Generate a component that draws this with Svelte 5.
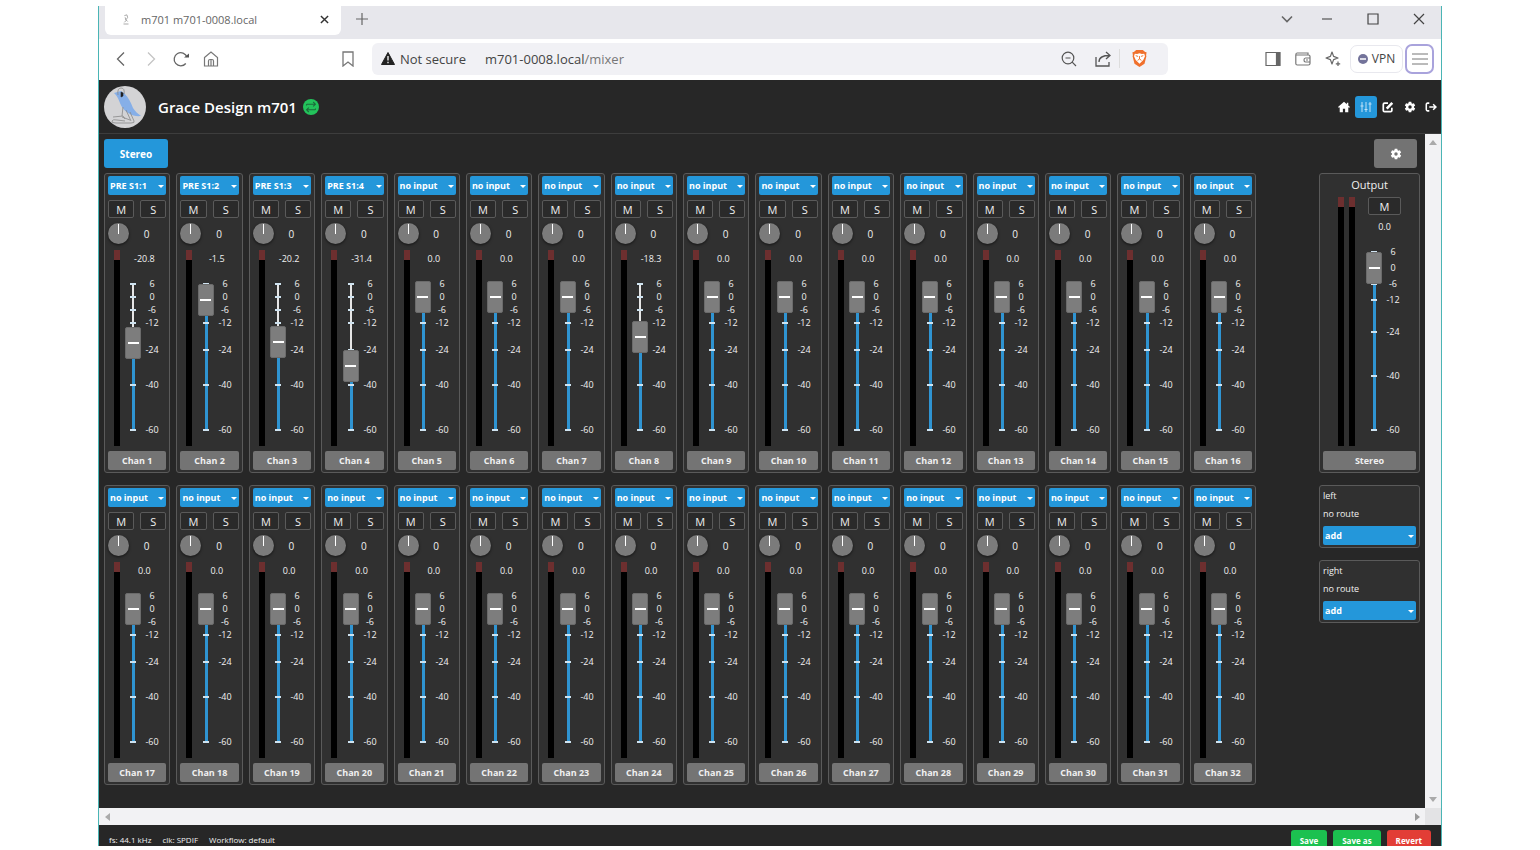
<script>
  const scale = [
    { db: 6, at: 0 },
    { db: 0, at: 0.09 },
    { db: -6, at: 0.18 },
    { db: -12, at: 0.27 },
    { db: -24, at: 0.452 },
    { db: -40, at: 0.695 },
    { db: -60, at: 1 },
  ];

  const levels = { 1: -20.8, 2: -1.5, 3: -20.2, 4: -31.4, 8: -18.3 };

  let channels = Array.from({ length: 32 }, (_, i) => {
    const id = i + 1;
    return {
      id,
      input: id <= 4 ? `PRE S1:${id}` : "no input",
      pan: 0,
      position: toPosition(levels[id] ?? 0),
    };
  });

  let output = { position: toPosition(0) };
  let routes = ["left", "right"];

  // fader travel is 0 (bottom) to 100 (top), linear between scale marks
  function toPosition(db) {
    for (let i = 1; i < scale.length; i++) {
      const hi = scale[i - 1];
      const lo = scale[i];
      if (db >= lo.db) {
        const part = (hi.db - db) / (hi.db - lo.db);
        return 100 - (hi.at + part * (lo.at - hi.at)) * 100;
      }
    }
    return 0;
  }

  function toDb(position) {
    const at = 1 - position / 100;
    for (let i = 1; i < scale.length; i++) {
      const hi = scale[i - 1];
      const lo = scale[i];
      if (at <= lo.at) {
        const part = (at - hi.at) / (lo.at - hi.at);
        const db = hi.db + part * (lo.db - hi.db);
        return (Math.round(db * 10) / 10 || 0).toFixed(1);
      }
    }
    return "-60.0";
  }
</script>

{#snippet gear()}
  <svg viewBox="0 0 16 16" width="12" height="12" fill="currentColor" aria-hidden="true">
    <path fill-rule="evenodd" d="M6.3 1h3.4l.4 2.1 1.1.6 2-.7 1.7 3-1.6 1.4v1.2l1.6 1.4-1.7 3-2-.7-1.1.6-.4 2.1H6.3l-.4-2.1-1.1-.6-2 .7-1.7-3 1.6-1.4V7.4L1.1 6l1.7-3 2 .7 1.1-.6zM8 5.7a2.3 2.3 0 1 0 0 4.6 2.3 2.3 0 0 0 0-4.6z" />
  </svg>
{/snippet}

{#snippet fader(strip, travel, label)}
  <div class="fader">
    <svg width="42" height={travel + 32} aria-hidden="true">
      <rect x="8" y="16" width="2" height={travel} fill="#e6e6e6" />
      <rect
        x="8"
        y={16 + travel * (1 - strip.position / 100)}
        width="3"
        height={(travel * strip.position) / 100}
        fill="#2f94d2"
      />
      {#each scale as mark}
        <rect x="6" y={Math.round(15 + mark.at * travel)} width="6" height="2" fill="#cfe3f0" />
        <text x="28" y={Math.round(19 + mark.at * travel)} text-anchor="middle">{mark.db}</text>
      {/each}
    </svg>
    <input type="range" min="0" max="100" step="any" aria-label={label} bind:value={strip.position} />
  </div>
{/snippet}

<div class="window">
  <div class="tabstrip">
    <div class="tab">
      <svg viewBox="0 0 12 14" width="10" height="12" fill="none" stroke="#999">
        <path d="M4 3l3-1 1 3-2 3 2 2M5 5l1 4-2 2M3 13h6" />
      </svg>
      <span>m701 m701-0008.local</span>
      <button aria-label="Close tab">
        <svg viewBox="0 0 10 10" width="9" height="9" stroke="#333" stroke-width="1.6"><path d="M1 1l8 8M9 1l-8 8" /></svg>
      </button>
    </div>
    <button class="newtab" aria-label="New tab">
      <svg viewBox="0 0 12 12" width="12" height="12" stroke="#666" stroke-width="1.2"><path d="M6 0v12M0 6h12" /></svg>
    </button>
    <div class="controls">
      <button class="search" aria-label="Search tabs">
        <svg viewBox="0 0 12 12" width="12" height="12" fill="none" stroke="#666" stroke-width="1.6"><path d="M1 3.500l5 5 5-5" /></svg>
      </button>
      <button aria-label="Minimize">
        <svg viewBox="0 0 12 12" width="12" height="12" stroke="#555" stroke-width="1.2"><path d="M1 6h10" /></svg>
      </button>
      <button aria-label="Maximize">
        <svg viewBox="0 0 12 12" width="12" height="12" fill="none" stroke="#444" stroke-width="1.2"><path d="M1 1h10v10H1z" /></svg>
      </button>
      <button aria-label="Close">
        <svg viewBox="0 0 12 12" width="12" height="12" stroke="#444" stroke-width="1.2"><path d="M1 1l10 10M11 1L1 11" /></svg>
      </button>
    </div>
  </div>

  <div class="toolbar">
    <div class="nav">
      <button aria-label="Back">
        <svg viewBox="0 0 16 16" width="16" height="16" fill="none" stroke="#666" stroke-width="1.3"><path d="M11 1.500L4.500 8l6.500 6.500" /></svg>
      </button>
      <button aria-label="Forward">
        <svg viewBox="0 0 16 16" width="16" height="16" fill="none" stroke="#c4c4c4" stroke-width="1.3"><path d="M5 1.500L11.500 8 5 14.500" /></svg>
      </button>
      <button aria-label="Reload">
        <svg viewBox="0 0 16 16" width="16" height="16" fill="none" stroke="#666" stroke-width="1.3">
          <path d="M12.800 12.500A6.600 6.600 0 1 1 14 6" />
          <path d="M11 6.500h5V2.500z" fill="#555" stroke="none" />
        </svg>
      </button>
      <button aria-label="Home">
        <svg viewBox="0 0 16 16" width="16" height="16" fill="none" stroke="#777" stroke-width="1.2">
          <path d="M1.500 6.500L8 1l6.500 5.500V15h-13zM5.500 15V10q0-1.500 1.500-1.500h2q1.500 0 1.500 1.500V15M8 9v6" />
        </svg>
      </button>
    </div>
    <button class="bookmark" aria-label="Bookmark">
      <svg viewBox="0 0 14 16" width="14" height="16" fill="none" stroke="#777" stroke-width="1.3"><path d="M2 1h10v14l-5-4-5 4z" /></svg>
    </button>
    <div class="address">
      <svg viewBox="0 0 14 13" width="14" height="13">
        <path d="M7 .5L13.500 12.500H.5z" fill="#222" stroke="#222" stroke-linejoin="round" />
        <path d="M7 4v4.500M7 9.800v1.500" stroke="#fff" stroke-width="1.3" />
      </svg>
      <span class="secure">Not secure</span>
      <span class="url">m701-0008.local<span>/mixer</span></span>
      <button aria-label="Zoom out">
        <svg viewBox="0 0 16 16" width="16" height="16" fill="none" stroke="#555" stroke-width="1.2"><circle cx="7" cy="7" r="5.800" /><path d="M11.200 11.200L15 15M4.500 7h5" /></svg>
      </button>
      <button aria-label="Share">
        <svg viewBox="0 0 16 16" width="16" height="16" fill="none" stroke="#555" stroke-width="1.3"><path d="M1 6v9h13v-4M4 11c0-5 4-6.500 10.500-6.500M11 1l4 3.500L11 8" /></svg>
      </button>
      <button class="shields" aria-label="Shields">
        <svg viewBox="0 0 18 20" width="17" height="19">
          <path d="M5.500 1h7L15 3l1.500.5-.5 3 .3 1-2 8L9 19l-5.300-3.500-2-8 .3-1-.5-3L3 3z" fill="#f0702c" />
          <path d="M4 5l2.500.3L9 4.500l2.500.8L14 5l.8 2.500-1.800 4L9 15.500l-4-4-1.800-4z" fill="#fff" />
          <path d="M5 7l2.500.8M13 7l-2.500.8M9 7.500v3L7 12M9 10.500l2 1.500" stroke="#f0702c" fill="none" />
        </svg>
      </button>
    </div>
    <div class="extras">
      <button aria-label="Sidebar">
        <svg viewBox="0 0 16 16" width="16" height="16" fill="none" stroke="#666" stroke-width="1.2"><path d="M1 1.500h14v13H1z" /><path d="M11.500 2h3v12h-3z" fill="#666" /></svg>
      </button>
      <button aria-label="Wallet">
        <svg viewBox="0 0 16 16" width="16" height="16" fill="none" stroke="#777" stroke-width="1.2"><path d="M13 4V2H2Q.8 2 .8 4v8.500q0 1.500 1.500 1.500h11q1.700 0 1.700-1.500V5.500Q15 4 13.500 4H1M15 7h-4.500Q9 7 9 9t1.500 2H15M11 9h2" /></svg>
      </button>
      <button aria-label="Assistant">
        <svg viewBox="0 0 16 16" width="16" height="16" fill="none" stroke="#666" stroke-width="1.2" stroke-linejoin="round"><path d="M7 1l1.600 4.400L13 7 8.600 8.600 7 13 5.400 8.600 1 7l4.400-1.600zM13 10.500v4.500M10.800 12.800h4.400" /></svg>
      </button>
      <button class="vpn">
        <svg viewBox="0 0 10 10" width="10" height="10"><circle cx="5" cy="5" r="5" fill="#73739a" /><path d="M2 5h6" stroke="#fff" stroke-width="1.5" /></svg>
        VPN
      </button>
      <button class="menu" aria-label="Menu">
        <svg viewBox="0 0 16 12" width="16" height="12" stroke="#777"><path d="M0 1h16M0 6h16M0 11h16" /></svg>
      </button>
    </div>
  </div>

  <header>
    <svg viewBox="0 0 42 42" width="42" height="42" fill="none">
      <circle cx="21" cy="21" r="21" fill="#d3d3d5" />
      <path d="M10 7l7-2 3 2c5 5 7 10 9 15 2 3 5 6 8 8-8 1-15-3-19-9-3-5-3-9-8-14z" fill="#86afe8" />
      <path d="M14 9q-1-7 3-7t3 6M19 21l-1 9M22 24l5 11M18 31l8 3M26 26l4 9q1 2-3 2H12q-5 0-4-2t5-1l8 1M9 31l10-1 2 3" stroke="#888" stroke-width=".8" />
      <path d="M17 6l2 1v3l-2 1z" fill="#222" stroke="#222" stroke-width=".6" />
    </svg>
    <h1>Grace Design m701</h1>
    <svg viewBox="0 0 16 16" width="16" height="16" fill="none">
      <circle cx="8" cy="8" r="8" fill="#23c35b" />
      <path d="M3.500 6.500V6q0-.8.8-.8h8M10.200 3l2.200 2.200-2.200 2.200M12.500 9.500v.5q0 .8-.8.800h-8M5.800 8.600l-2.200 2.200L5.800 13" stroke="#1c6c3b" stroke-width="1.1" />
    </svg>
    <nav>
      <a href="#home" aria-label="Home">
        <svg viewBox="0 0 14 14" width="12" height="12" fill="currentColor"><path d="M7 .8L0 7l1 1 1-.8V13h3.700V9h2.600v4H12V7.200l1 .8 1-1-2-1.800V2h-1.700v1.700z" /></svg>
      </a>
      <a href="#mixer" class="active" aria-label="Mixer">
        <svg viewBox="0 0 12 12" width="12" height="12" stroke="#bfe2f8"><path d="M2 1v10M6 1v10M10 1v10M.5 5h3M4.500 8.500h3M8.500 3h3" /></svg>
      </a>
      <a href="#edit" aria-label="Edit">
        <svg viewBox="0 0 14 14" width="12" height="12" fill="none" stroke="currentColor" stroke-width="2"><path d="M7 2.500H3q-1.500 0-1.500 1.500v7q0 1.500 1.500 1.500h7q1.500 0 1.500-1.500V8" /><path d="M5.500 8.800L12 2.200" stroke-width="3" /></svg>
      </a>
      <a href="#settings" aria-label="Settings">{@render gear()}</a>
      <a href="#logout" aria-label="Log out">
        <svg viewBox="0 0 14 14" width="12" height="12" fill="none" stroke="currentColor" stroke-width="1.8"><path d="M5 2.500H3Q1.500 2.500 1.500 4v6q0 1.500 1.500 1.500h2M5 7h7.500M9.500 3.800L12.800 7 9.500 10.200" /></svg>
      </a>
    </nav>
  </header>

  <div class="body">
    <main>
      <div class="tabs">
        <button class="primary">Stereo</button>
        <button class="config" aria-label="Mixer settings">{@render gear()}</button>
      </div>
      <div class="mixer">
        <div class="channels">
          {#each channels as channel (channel.id)}
            <section class="strip">
              <div class="select">
                <select aria-label="Input for channel {channel.id}" bind:value={channel.input}>
                  <option>{channel.input}</option>
                </select>
              </div>
              <div class="buttons">
                <button class="toggle">M</button>
                <button class="toggle">S</button>
              </div>
              <div class="pan">
                <input type="range" min="-100" max="100" aria-label="Pan {channel.id}" bind:value={channel.pan} />
                <output>{channel.pan}</output>
              </div>
              <div class="level">
                <div class="meters"><div class="meter"></div></div>
                <div class="gain">
                  <output>{toDb(channel.position)}</output>
                  {@render fader(channel, 146, `Level ${channel.id}`)}
                </div>
              </div>
              <button class="name">Chan {channel.id}</button>
            </section>
          {/each}
        </div>
        <aside>
          <section class="strip master">
            <h2>Output</h2>
            <div class="level">
              <div class="meters">
                <div class="meter"></div>
                <div class="meter"></div>
              </div>
              <div class="gain">
                <button class="toggle">M</button>
                <output>{toDb(output.position)}</output>
                {@render fader(output, 178, "Output level")}
              </div>
            </div>
            <button class="name">Stereo</button>
          </section>
          {#each routes as route}
            <section class="strip route">
              <p>{route}</p>
              <p>no route</p>
              <div class="select">
                <select aria-label="Add {route} route"><option>add</option></select>
              </div>
            </section>
          {/each}
        </aside>
      </div>
    </main>
    <div class="vscroll">
      <button class="up" aria-label="Scroll up"></button>
      <button class="down" aria-label="Scroll down"></button>
    </div>
  </div>
  <div class="hscroll">
    <button class="left" aria-label="Scroll left"></button>
    <button class="right" aria-label="Scroll right"></button>
    <div class="corner"></div>
  </div>

  <footer>
    <span>fs: 44.1 kHz</span>
    <span>clk: SPDIF</span>
    <span>Workflow: default</span>
    <div class="actions">
      <button class="save">Save</button>
      <button class="save">Save as</button>
      <button class="revert">Revert</button>
    </div>
  </footer>
</div>

<style>
  :global(body) {
    margin: 0;
    background: #fff;
    overflow: hidden;
  }
  .window,
  .window * {
    box-sizing: border-box;
  }
  .window {
    display: flex;
    flex-direction: column;
    height: calc(100vh - 10px);
    margin: 6px 98px 4px;
    overflow: hidden;
    border: solid #4ab5b5;
    border-width: 0 1px;
    background: #272727;
    color: #f0f0f0;
    font-family: "Open Sans", "Noto Sans", sans-serif;
    font-size: 9px;
  }
  svg {
    display: block;
    flex: none;
  }
  button {
    display: flex;
    align-items: center;
    justify-content: center;
    padding: 0;
    border: 0;
    background: none;
    color: inherit;
    font: inherit;
  }

  .tabstrip {
    display: flex;
    flex: none;
    height: 33px;
    background: #e7e7ec;
    color: #666;
  }
  .tab {
    display: flex;
    align-items: center;
    width: 236px;
    height: 29px;
    margin-left: 6px;
    padding: 0 12px 3px 16px;
    border-radius: 0 0 6px 6px;
    background: #fff;
    font-size: 11px;
  }
  .tab span {
    flex: 1;
    margin-left: 10px;
  }
  .newtab {
    height: 25px;
    margin-left: 15px;
  }
  .controls {
    display: flex;
    align-items: center;
    gap: 34px;
    height: 25px;
    margin-left: auto;
    padding-right: 16px;
  }
  .search {
    margin-right: -6px;
  }
  .toolbar {
    display: flex;
    align-items: center;
    flex: none;
    height: 41px;
    padding-bottom: 2px;
    background: #fff;
    color: #444;
  }
  .nav {
    display: flex;
    gap: 14px;
    width: 236px;
    padding-left: 14px;
  }
  .bookmark {
    margin: 0 17px 0 6px;
  }
  .address {
    display: flex;
    align-items: center;
    flex: 1;
    height: 32px;
    padding: 0 20px 0 9px;
    border-radius: 6px;
    background: #f1f1f5;
    font-size: 13px;
  }
  .secure {
    margin: 0 19px 0 5px;
  }
  .url {
    flex: 1;
  }
  .url span {
    color: #777;
  }
  .address button + button {
    margin-left: 18px;
  }
  .address .shields {
    margin-left: 8px;
    padding-left: 11px;
    border-left: 1px solid #ddd;
  }
  .extras {
    display: flex;
    align-items: center;
    gap: 14px;
    margin-left: 97px;
    padding-right: 7px;
  }
  .vpn {
    gap: 4px;
    width: 53px;
    height: 28px;
    margin: 0 -12px 0 -5px;
    border: 1px solid #e8e8ee;
    border-radius: 7px;
    font-size: 12px;
  }
  .menu {
    width: 29px;
    height: 30px;
    border: 2px solid #a9a3dc;
    border-radius: 7px;
  }

  header {
    display: flex;
    align-items: center;
    flex: none;
    height: 54px;
    padding-left: 5px;
    border-bottom: 1px solid #3d3d3d;
  }
  h1 {
    margin: 0 6px 0 12px;
    color: #fff;
    font-size: 15px;
    font-weight: 600;
  }
  nav {
    display: flex;
    margin-left: auto;
  }
  nav a {
    display: flex;
    align-items: center;
    justify-content: center;
    width: 22px;
    height: 22px;
    border-radius: 3px;
    color: #fff;
  }
  nav a:last-child {
    width: 20px;
  }
  .active,
  .primary {
    background: #2497da;
  }

  .body {
    display: flex;
    flex: none;
  }
  main {
    flex: 1;
    padding: 5px 5px 23px;
  }
  .tabs {
    display: flex;
    justify-content: space-between;
    margin-bottom: 5px;
    padding-right: 3px;
  }
  .tabs button {
    width: 64px;
    height: 29px;
    border-radius: 3px;
    color: #fff;
    font-size: 10px;
    font-weight: 700;
  }
  .tabs .config {
    width: 43px;
    background: #737373;
  }
  .mixer {
    display: flex;
    align-items: flex-start;
    gap: 63px;
  }
  .channels {
    display: grid;
    grid-template-columns: repeat(16, 1fr);
    gap: 12px 6px;
    flex: 1;
  }
  aside {
    display: flex;
    flex-direction: column;
    gap: 12px;
    width: 101px;
  }
  .strip {
    display: flex;
    flex-direction: column;
    min-width: 0;
    padding: 2px 3px;
    border: 1px solid #5a5a5a;
    border-radius: 3px;
    background: #303030;
  }
  .select {
    position: relative;
  }
  .select::after {
    content: "";
    position: absolute;
    top: 9px;
    right: 2px;
    border: 3px solid transparent;
    border-top-color: #fff;
    border-bottom: 0;
    pointer-events: none;
  }
  select {
    display: block;
    width: 100%;
    height: 19px;
    padding: 0 2px;
    appearance: none;
    border: 0;
    border-radius: 2px;
    background: #2497da;
    color: #fff;
    font: inherit;
    font-weight: 700;
  }
  .buttons {
    display: flex;
    gap: 6px;
    margin: 5px 0 4px;
  }
  .toggle {
    flex: 1;
    height: 18px;
    border: 1px solid #5a5a5a;
    border-radius: 2px;
    background: #2a2a2a;
    font-size: 11px;
  }
  .pan {
    display: flex;
    align-items: center;
    height: 23px;
  }
  .pan input {
    width: 21px;
    height: 21px;
    margin: 0;
    appearance: none;
    border-radius: 50%;
    background:
      linear-gradient(#fff, #fff) 10px 1px / 1px 10px no-repeat,
      #7b7b7b;
    box-shadow: 0 1px 3px #0009;
  }
  .pan input::-webkit-slider-thumb {
    opacity: 0;
  }
  .pan output {
    flex: 1;
    padding-right: 2px;
    text-align: center;
    font-size: 10px;
  }
  .level {
    display: flex;
    justify-content: space-between;
    margin-top: 5px;
  }
  .meters {
    display: flex;
    gap: 5px;
    padding-left: 6px;
  }
  .meter {
    width: 6px;
    border-top: 10px solid #6d2f2f;
    background: #000;
  }
  .gain {
    display: flex;
    flex-direction: column;
    width: 42px;
  }
  .gain output {
    height: 18px;
    padding-right: 2px;
    line-height: 17px;
    text-align: center;
  }
  .fader {
    display: grid;
    justify-items: start;
  }
  .fader > * {
    grid-area: 1 / 1;
  }
  .fader text {
    fill: #f0f0f0;
    font-size: 9px;
  }
  .fader input {
    width: 16px;
    height: 100%;
    margin: 0 1px;
    appearance: none;
    background: none;
    writing-mode: vertical-lr;
    direction: rtl;
  }
  .fader input::-webkit-slider-thumb {
    width: 16px;
    height: 32px;
    appearance: none;
    border: 1px solid #6b6b6b;
    border-radius: 2px;
    background:
      linear-gradient(#fff, #fff) center / 11px 2px no-repeat,
      #7d7d7d;
  }
  .name {
    height: 19px;
    margin-top: 5px;
    border-radius: 2px;
    background: #747474;
    font-weight: 700;
  }

  .master h2 {
    margin: 0;
    font-size: 11px;
    font-weight: 400;
    line-height: 17px;
    text-align: center;
  }
  .master .level {
    margin-top: 4px;
    padding-right: 4px;
  }
  .master .meters {
    padding-left: 15px;
  }
  .master .gain {
    width: 47px;
  }
  .master .toggle {
    flex: none;
    width: 33px;
    margin-left: 3px;
  }
  .master .gain output {
    width: 33px;
    height: 21px;
    margin-left: 3px;
    padding: 0;
    line-height: 23px;
  }
  .route p {
    margin: 0 0 3px;
    line-height: 15px;
  }
  .route .select {
    margin-top: 2px;
  }

  .vscroll {
    display: flex;
    flex-direction: column;
    justify-content: space-between;
    align-items: center;
    width: 16px;
    padding: 6px 0;
    background: #f2f2f4;
  }
  .vscroll button,
  .hscroll button {
    border: 4px solid transparent;
  }
  .vscroll .up {
    border-top: 0;
    border-bottom: 5px solid #aaa;
  }
  .vscroll .down {
    border-bottom: 0;
    border-top: 5px solid #aaa;
  }
  .hscroll {
    display: flex;
    align-items: center;
    flex: none;
    height: 17px;
    padding-left: 6px;
    background: #f2f2f4;
  }
  .hscroll .left {
    border-left: 0;
    border-right: 5px solid #aaa;
  }
  .hscroll .right {
    margin-left: auto;
    border-right: 0;
    border-left: 5px solid #999;
  }
  .corner {
    width: 16px;
    height: 17px;
    margin-left: 5px;
    background: #e3e3e5;
  }

  footer {
    display: flex;
    align-items: flex-start;
    gap: 11px;
    flex: none;
    padding: 5px 10px;
    font-size: 8px;
  }
  footer span {
    margin-top: 4px;
    line-height: 12px;
  }
  .actions {
    display: flex;
    gap: 6px;
    margin-left: auto;
  }
  .actions button {
    height: 20px;
    padding: 0 9px;
    border-radius: 3px;
    color: #fff;
    font-weight: 700;
  }
  .save {
    background: #1cc150;
  }
  .revert {
    background: #e23d36;
  }
</style>
